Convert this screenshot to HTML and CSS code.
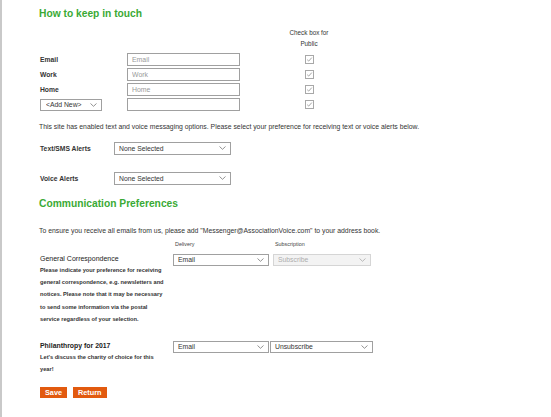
FILE: index.html
```html
<!DOCTYPE html>
<html>
<head>
<meta charset="utf-8">
<link rel="stylesheet" href="styles.css">
</head>
<body>
<div class="page">
  <h2 class="heading">How to keep in touch</h2>

  <div class="pub-head-row">
    <div class="pub-head">Check box for<br>Public</div>
  </div>

  <div class="contact">
    <label class="lbl">Email</label>
    <input class="txt" type="text" placeholder="Email">
    <span class="chk"><svg width="9" height="9" viewBox="0 0 9 9"><rect x="0.5" y="0.5" width="8" height="8" fill="#fff" stroke="#a8a8a8"/><path d="M2.2 4.7 L3.7 6.1 L6.8 2.6" fill="none" stroke="#9a9a9a" stroke-width="0.9"/></svg></span>

    <label class="lbl">Work</label>
    <input class="txt" type="text" placeholder="Work">
    <span class="chk"><svg width="9" height="9" viewBox="0 0 9 9"><rect x="0.5" y="0.5" width="8" height="8" fill="#fff" stroke="#a8a8a8"/><path d="M2.2 4.7 L3.7 6.1 L6.8 2.6" fill="none" stroke="#9a9a9a" stroke-width="0.9"/></svg></span>

    <label class="lbl">Home</label>
    <input class="txt" type="text" placeholder="Home">
    <span class="chk"><svg width="9" height="9" viewBox="0 0 9 9"><rect x="0.5" y="0.5" width="8" height="8" fill="#fff" stroke="#a8a8a8"/><path d="M2.2 4.7 L3.7 6.1 L6.8 2.6" fill="none" stroke="#9a9a9a" stroke-width="0.9"/></svg></span>

    <span class="sel sel-add"><select><option>&lt;Add New&gt;</option></select><svg class="chev" width="7" height="4" viewBox="0 0 7 4"><path d="M0.5 0.5 L3.5 3.3 L6.5 0.5" fill="none" stroke="#777" stroke-width="0.8"/></svg></span>
    <input class="txt" type="text">
    <span class="chk"><svg width="9" height="9" viewBox="0 0 9 9"><rect x="0.5" y="0.5" width="8" height="8" fill="#fff" stroke="#a8a8a8"/><path d="M2.2 4.7 L3.7 6.1 L6.8 2.6" fill="none" stroke="#9a9a9a" stroke-width="0.9"/></svg></span>
  </div>

  <p class="note note-sms">This site has enabled text and voice messaging options. Please select your preference for receiving text or voice alerts below.</p>

  <div class="alert-row">
    <span class="lbl alert-lbl">Text/SMS Alerts</span>
    <span class="sel sel-alert"><select><option>None Selected</option></select><svg class="chev" width="7" height="4" viewBox="0 0 7 4"><path d="M0.5 0.5 L3.5 3.3 L6.5 0.5" fill="none" stroke="#777" stroke-width="0.8"/></svg></span>
  </div>
  <div class="alert-row alert-row-2">
    <span class="lbl alert-lbl">Voice Alerts</span>
    <span class="sel sel-alert"><select><option>None Selected</option></select><svg class="chev" width="7" height="4" viewBox="0 0 7 4"><path d="M0.5 0.5 L3.5 3.3 L6.5 0.5" fill="none" stroke="#777" stroke-width="0.8"/></svg></span>
  </div>

  <h2 class="heading heading-2">Communication Preferences</h2>

  <p class="note note-email">To ensure you receive all emails from us, please add "Messenger@AssociationVoice.com" to your address book.</p>

  <div class="prefs">
    <span></span>
    <span class="col-head">Delivery</span>
    <span class="col-head">Subscription</span>

    <div class="pref-info">
      <div class="pref-title">General Correspondence</div>
      <div class="pref-desc">Please indicate your preference for receiving general correspondence, e.g. newsletters and notices. Please note that it may be necessary to send some information via the postal service regardless of your selection.</div>
    </div>
    <span class="sel sel-pref"><select><option>Email</option></select><svg class="chev" width="7" height="4" viewBox="0 0 7 4"><path d="M0.5 0.5 L3.5 3.3 L6.5 0.5" fill="none" stroke="#777" stroke-width="0.8"/></svg></span>
    <span class="sel sel-pref sel-sub disabled"><select disabled><option>Subscribe</option></select><svg class="chev" width="7" height="4" viewBox="0 0 7 4"><path d="M0.5 0.5 L3.5 3.3 L6.5 0.5" fill="none" stroke="#aaa" stroke-width="0.8"/></svg></span>

    <div class="pref-info pref-info-2">
      <div class="pref-title pref-title-b">Philanthropy for 2017</div>
      <div class="pref-desc">Let's discuss the charity of choice for this year!</div>
    </div>
    <span class="sel sel-pref pref-2"><select><option>Email</option></select><svg class="chev" width="7" height="4" viewBox="0 0 7 4"><path d="M0.5 0.5 L3.5 3.3 L6.5 0.5" fill="none" stroke="#777" stroke-width="0.8"/></svg></span>
    <span class="sel sel-pref sel-unsub pref-2"><select><option>Unsubscribe</option></select><svg class="chev" width="7" height="4" viewBox="0 0 7 4"><path d="M0.5 0.5 L3.5 3.3 L6.5 0.5" fill="none" stroke="#777" stroke-width="0.8"/></svg></span>
  </div>

  <div class="actions">
    <button class="btn" type="button">Save</button>
    <button class="btn" type="button">Return</button>
  </div>
</div>
</body>
</html>
```

FILE: styles.css
```css
* { box-sizing: border-box; }

html, body {
  margin: 0;
  padding: 0;
  background: #fff;
}

body {
  font-family: "Liberation Sans", Arial, sans-serif;
  color: #333;
  border-left: 2px solid #c9c9c9;
  min-height: 417px;
}

.page {
  padding: 8px 0 0 37px;
}

.heading {
  margin: 0;
  font-size: 10.25px;
  line-height: 12px;
  font-weight: bold;
  color: #3aaa35;
}

.pub-head-row {
  display: flex;
  padding-left: 242px;
  margin-top: 6.5px;
}

.pub-head {
  width: 56px;
  text-align: center;
  font-size: 6.3px;
  line-height: 11px;
  color: #333;
}

.contact {
  display: grid;
  grid-template-columns: 88px 113px 41px 56px;
  grid-auto-rows: 13px;
  row-gap: 2px;
  align-items: center;
  margin-top: 4.5px;
}

.lbl {
  font-size: 6.75px;
  font-weight: bold;
  color: #333;
  padding-left: 1px;
}

.txt {
  width: 113px;
  height: 13px;
  margin: 0;
  border: 1px solid #a0a0a0;
  padding: 0 4px;
  font-family: "Liberation Sans", Arial, sans-serif;
  font-size: 6.9px;
  color: #333;
  background: #fff;
  outline: none;
}

.txt::placeholder { color: #999; }

.chk {
  grid-column: 4;
  display: flex;
  justify-content: center;
  height: 9px;
}

.chk svg { display: block; }

.sel {
  position: relative;
  display: inline-block;
  height: 12px;
}

.sel select {
  -webkit-appearance: none;
  appearance: none;
  display: block;
  width: 100%;
  height: 100%;
  margin: 0;
  border: 1px solid #a0a0a0;
  border-radius: 0;
  background: #fff;
  font-family: "Liberation Sans", Arial, sans-serif;
  font-size: 6.8px;
  color: #333;
  padding: 0 0 0 4px;
  line-height: 10px;
}

.sel .chev {
  position: absolute;
  right: 5px;
  top: 4px;
}

.sel-add {
  width: 62px;
  margin-left: 1px;
}

.sel-add select { padding-left: 5px; }

.note {
  margin: 11px 0 0;
  font-size: 6.85px;
  line-height: 10px;
  color: #333;
}

.alert-row {
  display: flex;
  align-items: center;
  margin-top: 10px;
}

.alert-row-2 { margin-top: 17px; }

.alert-lbl {
  width: 75px;
}

.sel-alert {
  width: 117px;
  height: 13px;
}

.heading-2 {
  margin-top: 13px;
}

.note-email {
  margin-top: 16px;
}

.prefs {
  display: grid;
  grid-template-columns: 134px 100px 104px;
  align-items: start;
  margin-top: 3.5px;
}

.col-head {
  font-size: 5.4px;
  line-height: 9px;
  color: #444;
  padding-left: 2px;
  margin-bottom: 5.5px;
}

.pref-info {
  padding-left: 1px;
}

.pref-title {
  font-size: 7px;
  line-height: 10px;
  color: #222;
}

.pref-title-b {
  font-weight: bold;
  font-size: 6.9px;
}

.pref-desc {
  font-size: 5.7px;
  font-weight: bold;
  line-height: 12.2px;
  color: #333;
  width: 128px;
}

.pref-info-2 {
  margin-top: 16px;
}

.sel-pref {
  width: 96px;
}

.sel-sub { width: 98px; }

.disabled select {
  background: #efefef;
  color: #8a8a8a;
  border-color: #c4c4c4;
}

.pref-2 { margin-top: 16px; }

.sel-unsub {
  width: 103px;
  margin-left: -3px;
}

.actions {
  display: flex;
  gap: 6px;
  margin-top: 11.5px;
  padding-left: 1px;
}

.btn {
  margin: 0;
  border: none;
  background: #e25a0f;
  color: #fff;
  font-family: "Liberation Sans", Arial, sans-serif;
  font-weight: bold;
  font-size: 7.3px;
  height: 11px;
  line-height: 11px;
  padding: 0 5px;
}
```
